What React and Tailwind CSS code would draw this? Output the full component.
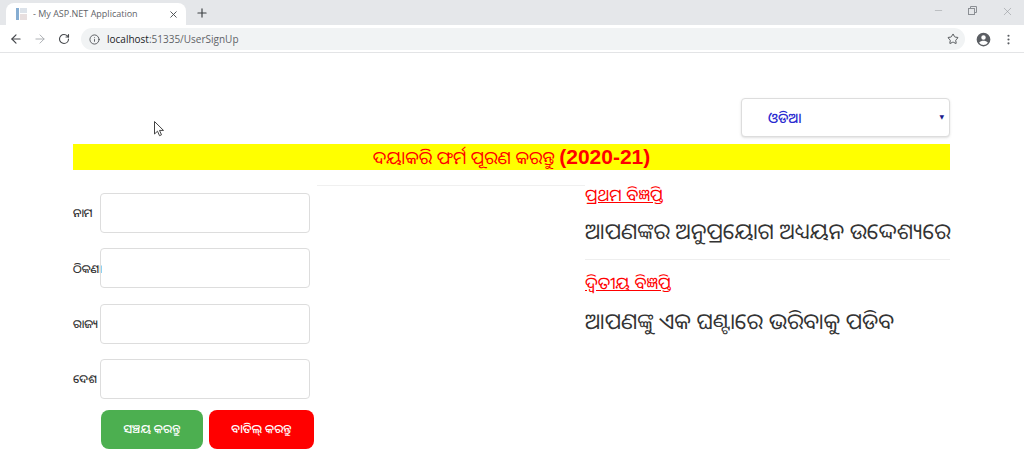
import React from "react";
import { ArrowLeft, ArrowRight, RotateCw, Info, Star, Plus, X, Minus, MoreVertical } from "lucide-react";

const font = "font-['Noto_Sans_Oriya','Noto_Sans','Lohit_Odia','DejaVu_Sans',sans-serif]";

function BrowserChrome() {
    return (
        <div className="font-['Open_Sans',sans-serif]">
            {/* Tab strip */}
            <div className="flex h-[25px] bg-[#e5e7ea]">
                <div className="ml-[6px] mt-[3px] flex w-[180px] items-center rounded-t-lg bg-white pl-[10px] pr-[7px]">
                    <svg width="12" height="14" viewBox="0 0 12 14" className="shrink-0">
                        <rect x="0" y="1" width="3" height="12" fill="#86add2" />
                        <rect x="4" y="1" width="7" height="5" fill="#dde3ea" />
                        <rect x="4" y="7" width="7" height="6" fill="#e8dfdf" />
                    </svg>
                    <span className="ml-[5px] flex-1 truncate text-[9px] text-[#5f6368]">- My ASP.NET Application</span>
                    <X size={11} strokeWidth={2} className="text-[#45484d]" />
                </div>
                <Plus size={14} strokeWidth={2} className="ml-[9px] mt-[6px] text-[#3c4043]" />
                <div className="ml-auto flex items-start gap-[23px] pr-[10px] pt-[5px] text-[#8b8f94]">
                    <Minus size={11} strokeWidth={1} />
                    <svg width="11" height="11" viewBox="0 0 11 11" fill="none" stroke="currentColor">
                        <rect x="1.5" y="3.5" width="6" height="6" />
                        <path d="M3.5 3.5v-2h6v6h-2" />
                    </svg>
                    <X size={13} strokeWidth={1} />
                </div>
            </div>
            {/* Toolbar */}
            <div className="flex h-[28px] items-center border-b border-[#e3e4e6] bg-white pl-[9px] pr-[9px] pt-[1px]">
                <ArrowLeft size={14} strokeWidth={2} className="text-[#44474b]" />
                <ArrowRight size={14} strokeWidth={1.6} className="ml-[10px] text-[#a8abaf]" />
                <RotateCw size={12} strokeWidth={2.2} className="ml-[11px] text-[#44474b]" />
                <div className="ml-[11px] flex h-[22px] flex-1 items-center rounded-full bg-[#f1f3f4] pl-[8px] pr-[6px]">
                    <Info size={11} strokeWidth={1.8} className="text-[#44474b]" />
                    <span className="ml-[7px] text-[10px] text-[#5f6368]">
                        <span className="text-[#202124]">localhost</span>:51335/UserSignUp
                    </span>
                    <Star size={12} strokeWidth={1.8} className="ml-auto text-[#44474b]" />
                </div>
                <svg width="15" height="15" viewBox="0 0 24 24" className="ml-[11px] text-[#5b5e63]" fill="currentColor">
                    <path d="M12 1a11 11 0 1 0 0 22 11 11 0 0 0 0-22zm0 4a3.6 3.6 0 1 1 0 7.200a3.600 3.600 0 0 1 0-7.200zm0 15.600a8.700 8.700 0 0 1-7-3.600c1.500-2 4.600-3 7-3s5.500 1 7 3a8.700 8.700 0 0 1-7 3.600z" />
                </svg>
                <MoreVertical size={13} strokeWidth={2} className="ml-[11px] text-[#5b5e63]" />
            </div>
        </div>
    );
}

function Row({ label }) {
    return (
        <div className="flex h-[40px] items-center">
            <label className="w-[27px] whitespace-nowrap text-[11.500px] font-medium text-[#333]">{label}</label>
            <input className="h-[40px] w-[210px] rounded border border-[#ddd] bg-transparent" />
        </div>
    );
}

export default function App() {
    return (
        <div className={`relative h-[466px] w-[1024px] overflow-hidden bg-white ${font}`}>
            <BrowserChrome />

            <div className="ml-[73px] w-[877px] pt-[45px]">
                <div className="flex justify-end">
                    <div className="flex h-[39px] w-[209px] items-center rounded border border-[#ddd] bg-white pl-[26px] pr-[5px] shadow-sm">
                        <span className="text-[14px] font-medium text-[#2a2ad0]">ଓଡିଆ</span>
                        <span className="ml-auto text-[6px] text-[#1a1a8c]">▼</span>
                    </div>
                </div>

                <h1 className="mt-[7px] h-[26px] bg-[#ffff00] text-center text-[18px] leading-[26px] text-[#ff0000]">
                    ଦୟାକରି ଫର୍ମ ପୂରଣ କରନ୍ତୁ <b className="font-['Liberation_Sans',sans-serif] text-[21px]">(2020-21)</b>
                </h1>

                <div className="mt-[15px] flex">
                    {/* Form */}
                    <div className="w-[244px] shrink-0 pt-[8px]">
                        <div className="flex flex-col gap-[15.330px]">
                            <Row label="ନାମ" />
                            <Row label="ଠିକଣା" />
                            <Row label="ରାଜ୍ୟ" />
                            <Row label="ଦେଶ" />
                        </div>
                        <div className="ml-[28px] mt-[11px] flex gap-[6px]">
                            <button className="h-[39px] w-[102px] rounded-lg bg-[#4caf50] text-[12px] font-medium text-white">ସଞ୍ଚୟ କରନ୍ତୁ</button>
                            <button className="h-[39px] w-[105px] rounded-lg bg-[#ff0000] text-[12px] font-medium text-white">ବାତିଲ୍ କରନ୍ତୁ</button>
                        </div>
                    </div>

                    {/* Notices */}
                    <div className="min-w-0 flex-1">
                        <div className="w-[268px] border-t border-[#f0f0f0]" />
                        <div className="ml-[268px]">
                            <div className="mt-[-3px] text-[17px] leading-[24px] text-[#ff0000] underline">ପ୍ରଥମ ବିଜ୍ଞପ୍ତି</div>
                            <div className="mt-[7px] whitespace-nowrap text-[22px] leading-[32px] text-[#333]">ଆପଣଙ୍କର ଅନୁପ୍ରୟୋଗ ଅଧ୍ୟୟନ ଉଦ୍ଦେଶ୍ୟରେ</div>
                            <div className="mt-[13px] border-t border-[#eeeeee]" />
                            <div className="mt-[11px] text-[17px] leading-[24px] text-[#ff0000] underline">ଦ୍ୱିତୀୟ ବିଜ୍ଞପ୍ତି</div>
                            <div className="mt-[9px] whitespace-nowrap text-[22px] leading-[32px] text-[#333]">ଆପଣଙ୍କୁ ଏକ ଘଣ୍ଟାରେ ଭରିବାକୁ ପଡିବ</div>
                        </div>
                    </div>
                </div>
            </div>

            {/* Mouse cursor */}
            <svg width="11" height="16" viewBox="0 0 11 16" className="absolute left-[154px] top-[121px]">
                <path d="M.5.500v12.500l3-2.800 2 4.500 2-.9-2-4.400h4z" fill="white" stroke="#444" strokeWidth="1" />
            </svg>
        </div>
    );
}
